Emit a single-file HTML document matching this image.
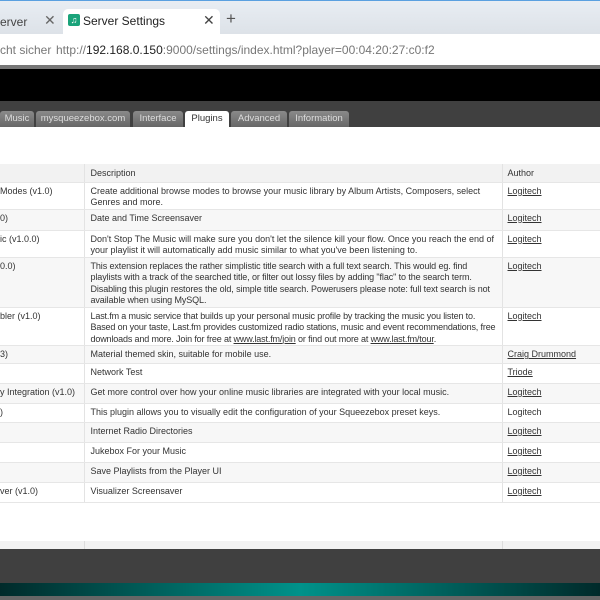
<!DOCTYPE html>
<html><head><style>
*{margin:0;padding:0;box-sizing:border-box}
body{width:600px;height:600px;overflow:hidden;font-family:"Liberation Sans",Arial,sans-serif;background:#fff;position:relative}
.abs{position:absolute}
table{border-collapse:collapse;position:absolute;left:0;top:164px;width:600px;font-size:9px;color:#333;table-layout:fixed}
td{vertical-align:top;padding:3px 6px 0 6px;border-bottom:1px solid #e6e6e6;line-height:11.5px;overflow:hidden}
td.a{padding-left:0;white-space:nowrap;border-right:1px solid #e3e3e3}
td.c{padding-left:5px;border-left:1px solid #e3e3e3;white-space:nowrap}
tr.o td{background:#f7f7f7}
tr.h td{background:#f2f2f2;padding-top:4px}
u{color:#333}
.tab{position:absolute;top:111px;height:16px;background:linear-gradient(#8a8a8a,#666);color:#ddd;font-size:9.5px;line-height:16px;text-align:center;border-radius:3px 3px 0 0}
</style></head><body>
<div class="abs" style="left:0;top:0;width:600px;height:34px;background:linear-gradient(#e8edf3,#dde2e8);border-top:1px solid #5aa0e0"></div>
<div class="abs" style="left:0;top:15px;font-size:12px;color:#444">erver</div>
<div class="abs" style="left:44px;top:12px;font-size:14px;color:#666">✕</div>
<div class="abs" style="left:63px;top:9px;width:157px;height:25px;background:#fff;border-radius:5px 5px 0 0"></div>
<div class="abs" style="left:68px;top:14px;width:12px;height:12px;background:#1aa37a;border-radius:2px;color:#fff;font-size:9px;line-height:12px;text-align:center">♫</div>
<div class="abs" style="left:83px;top:14px;font-size:12px;color:#222">Server Settings</div>
<div class="abs" style="left:203px;top:12px;font-size:14px;color:#444">✕</div>
<div class="abs" style="left:226px;top:9px;font-size:17px;color:#555">+</div>
<div class="abs" style="left:0;top:34px;width:600px;height:31px;background:#fff"></div>
<div class="abs" style="left:0;top:43px;font-size:12px;color:#777">cht sicher</div>
<div class="abs" style="left:56px;top:43px;font-size:12px;color:#777">http://<span style="color:#222">192.168.0.150</span>:9000/settings/index.html?player=00:04:20:27:c0:f2</div>
<div class="abs" style="left:0;top:65px;width:600px;height:4px;background:#777"></div>
<div class="abs" style="left:0;top:69px;width:600px;height:32px;background:#000"></div>
<div class="abs" style="left:0;top:101px;width:600px;height:26px;background:#404040"></div>
<div class="tab" style="left:0;width:34px">Music</div>
<div class="tab" style="left:36px;width:94px">mysqueezebox.com</div>
<div class="tab" style="left:133px;width:50px">Interface</div>
<div class="tab" style="left:185px;width:44px;background:#fff;color:#333">Plugins</div>
<div class="tab" style="left:231px;width:56px">Advanced</div>
<div class="tab" style="left:289px;width:60px">Information</div>
<table>
<colgroup><col style="width:84px"><col style="width:418px"><col style="width:98px"></colgroup>
<tr class="h" style="height:18px"><td class="a"></td><td>Description</td><td class="c">Author</td></tr>
<tr style="height:27px"><td class="a">Modes (v1.0)</td><td>Create additional browse modes to browse your music library by Album Artists, Composers, select Genres and more.</td><td class="c"><u>Logitech</u></td></tr>
<tr class="o" style="height:21px"><td class="a">0)</td><td>Date and Time Screensaver</td><td class="c"><u>Logitech</u></td></tr>
<tr style="height:27px"><td class="a">ic (v1.0.0)</td><td>Don't Stop The Music will make sure you don't let the silence kill your flow. Once you reach the end of your playlist it will automatically add music similar to what you've been listening to.</td><td class="c"><u>Logitech</u></td></tr>
<tr class="o" style="height:50px"><td class="a">0.0)</td><td style="letter-spacing:-0.1px">This extension replaces the rather simplistic title search with a full text search. This would eg. find playlists with a track of the searched title, or filter out lossy files by adding "flac" to the search term. Disabling this plugin restores the old, simple title search. Powerusers please note: full text search is not available when using MySQL.</td><td class="c"><u>Logitech</u></td></tr>
<tr style="height:37px"><td class="a">bler (v1.0)</td><td style="letter-spacing:-0.15px">Last.fm a music service that builds up your personal music profile by tracking the music you listen to. Based on your taste, Last.fm provides customized radio stations, music and event recommendations, free downloads and more. Join for free at <u>www.last.fm/join</u> or find out more at <u>www.last.fm/tour</u>.</td><td class="c"><u>Logitech</u></td></tr>
<tr class="o" style="height:18px"><td class="a">3)</td><td>Material themed skin, suitable for mobile use.</td><td class="c"><u>Craig Drummond</u></td></tr>
<tr style="height:20px"><td class="a"></td><td>Network Test</td><td class="c"><u>Triode</u></td></tr>
<tr class="o" style="height:20px"><td class="a">y Integration (v1.0)</td><td>Get more control over how your online music libraries are integrated with your local music.</td><td class="c"><u>Logitech</u></td></tr>
<tr style="height:19px"><td class="a">)</td><td>This plugin allows you to visually edit the configuration of your Squeezebox preset keys.</td><td class="c">Logitech</td></tr>
<tr class="o" style="height:20px"><td class="a"></td><td>Internet Radio Directories</td><td class="c"><u>Logitech</u></td></tr>
<tr style="height:20px"><td class="a"></td><td>Jukebox For your Music</td><td class="c"><u>Logitech</u></td></tr>
<tr class="o" style="height:20px"><td class="a"></td><td>Save Playlists from the Player UI</td><td class="c"><u>Logitech</u></td></tr>
<tr style="height:20px"><td class="a">ver (v1.0)</td><td>Visualizer Screensaver</td><td class="c"><u>Logitech</u></td></tr>
</table>
<div class="abs" style="left:0;top:541px;width:600px;height:8px;background:#f2f2f2"></div>
<div class="abs" style="left:84px;top:541px;width:1px;height:8px;background:#ddd"></div>
<div class="abs" style="left:502px;top:541px;width:1px;height:8px;background:#ddd"></div>
<div class="abs" style="left:0;top:549px;width:600px;height:34px;background:#404040"></div>
<div class="abs" style="left:0;top:583px;width:600px;height:13px;background:linear-gradient(90deg,#002a2a,#00928a 50%,#002a2a)"></div>
<div class="abs" style="left:0;top:596px;width:600px;height:4px;background:#666"></div>
</body></html>
